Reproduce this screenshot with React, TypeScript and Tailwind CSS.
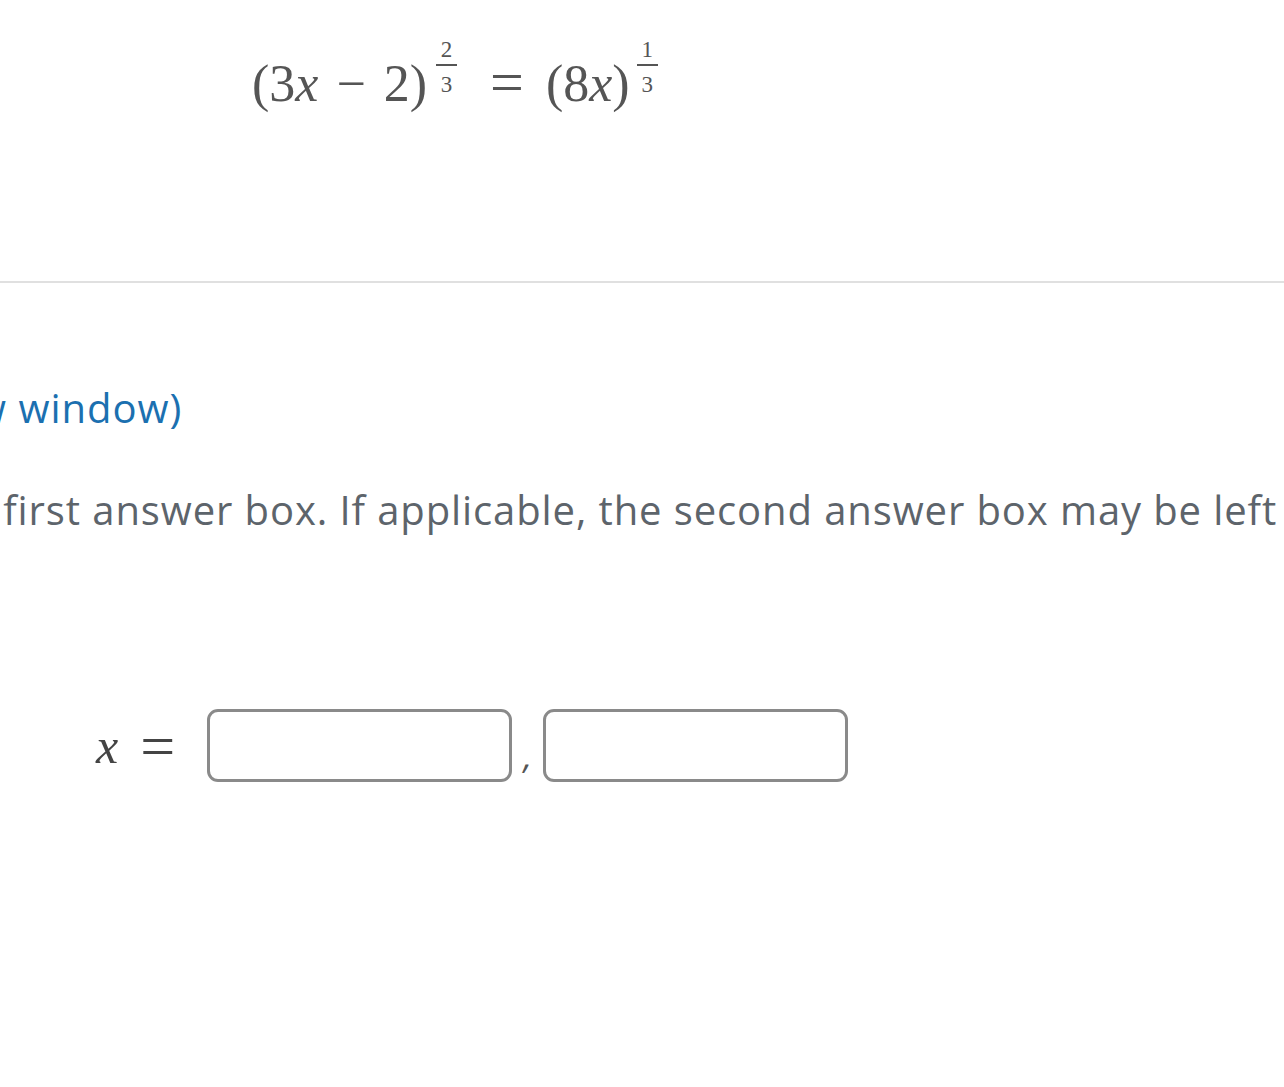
import React from "react";

const serif = { fontFamily: "'Liberation Serif', 'Times New Roman', serif" };

const Frac = ({ num, den }: { num: string; den: string }) => (
  <span className="flex flex-col items-center text-[23px] leading-[23px] text-[#555]">
    <span>{num}</span>
    <span className="w-[21px] h-[2px] bg-[#555] mt-[3px] mb-[7px]" />
    <span>{den}</span>
  </span>
);

export default function App() {
  return (
    <div className="w-[1284px] h-[1087px] overflow-hidden bg-white">
      {/* equation */}
      <div className="pt-[38px] pl-[252px] h-[281px]">
        <div className="flex items-start text-[52px] leading-[60px] text-[#555]" style={serif}>
          <span className="mt-[16px] whitespace-nowrap">
            (3<i>x</i>
            <span className="mx-[18px]">−</span>2)
          </span>
          <span className="ml-[9px]">
            <Frac num="2" den="3" />
          </span>
          <span className="mt-[14px] ml-[33px] mr-[22px] text-[60px]">=</span>
          <span className="mt-[16px] whitespace-nowrap">
            (8<i>x</i>)
          </span>
          <span className="ml-[7px]">
            <Frac num="1" den="3" />
          </span>
        </div>
      </div>

      <div className="h-[2px] bg-[#e0e0e0]" />

      {/* instructions */}
      <div className="whitespace-nowrap" style={{ fontFamily: "'Open Sans', sans-serif" }}>
        <div className="mt-[100px] ml-[-74px] text-[40px] tracking-[1px] text-[#1b70b0] leading-[50px]">
          new window)
        </div>
        <div className="mt-[52px] ml-[-72px] text-[40px] tracking-[0.9px] text-[#5d646b] leading-[50px]">
          the first answer box. If applicable, the second answer box may be left blank.)
        </div>
      </div>

      {/* answer row */}
      <div className="mt-[174px] ml-[96px] flex items-center">
        <span className="text-[50px] leading-[60px] text-[#444] italic mr-[22px]" style={serif}>
          x
        </span>
        <span className="text-[62px] leading-[60px] text-[#444] mr-[32px]" style={serif}>
          =
        </span>
        <div className="w-[305px] h-[73px] border-[3px] border-[#8a8a8a] rounded-[11px]" />
        <span
          className="w-[31px] text-center text-[34px] text-[#555] italic mt-[22px]"
          style={{ fontFamily: "'Open Sans', sans-serif" }}
        >
          ,
        </span>
        <div className="w-[305px] h-[73px] border-[3px] border-[#8a8a8a] rounded-[11px]" />
      </div>
    </div>
  );
}
